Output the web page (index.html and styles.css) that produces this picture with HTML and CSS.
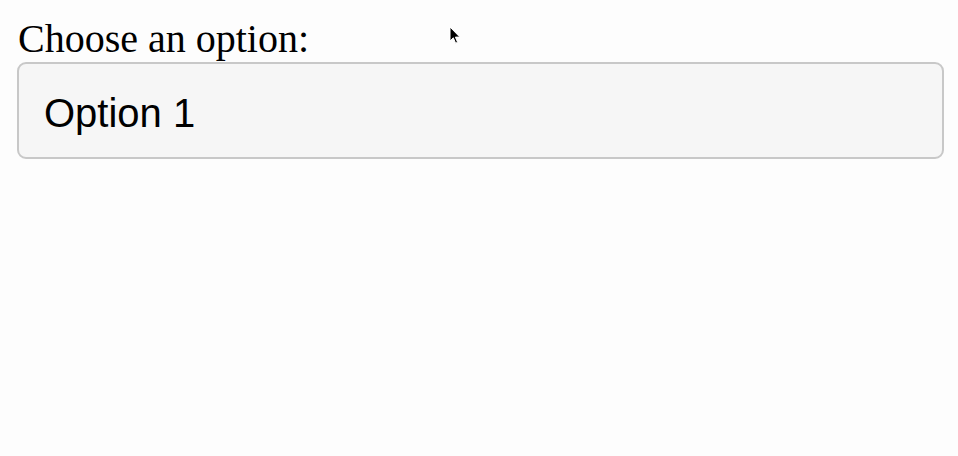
FILE: index.html
```html
<!DOCTYPE html>
<html lang="en">
<head>
<meta charset="utf-8">
<title>Choose an option</title>
<link rel="stylesheet" href="styles.css">
</head>
<body>
<main class="page">
  <label class="field-label" for="opt">Choose an option:</label>
  <div class="select" id="opt" role="combobox" aria-expanded="false">Option 1</div>
</main>
<svg class="cursor" width="12" height="19" viewBox="0 0 12 19" aria-hidden="true">
  <path d="M1 1 L1 15 L4.3 11.8 L6.6 17.2 L8.6 16.3 L6.4 11.1 L10.8 11.1 Z" fill="#000" stroke="#fff" stroke-width="1" stroke-linejoin="round"/>
</svg>
</body>
</html>
```
FILE: styles.css
```css
html, body {
  margin: 0;
  padding: 0;
  background: #fdfdfd;
}

.page {
  display: flex;
  flex-direction: column;
  gap: 0;
  padding: 16px 14px 0 17px;
}

.field-label {
  display: block;
  font-family: "Liberation Serif", "Times New Roman", serif;
  font-size: 40px;
  line-height: 46px;
  color: #000;
  padding-left: 1px;
}

.select {
  box-sizing: border-box;
  height: 97px;
  display: flex;
  align-items: center;
  padding: 5px 24px 0 25px;
  border: 2px solid #c8c8c8;
  border-radius: 9px;
  background: #f6f6f6;
  font-family: "Liberation Sans", Arial, Helvetica, sans-serif;
  font-size: 40px;
  color: #000;
}

.cursor {
  position: absolute;
  left: 449px;
  top: 26px;
}
```
